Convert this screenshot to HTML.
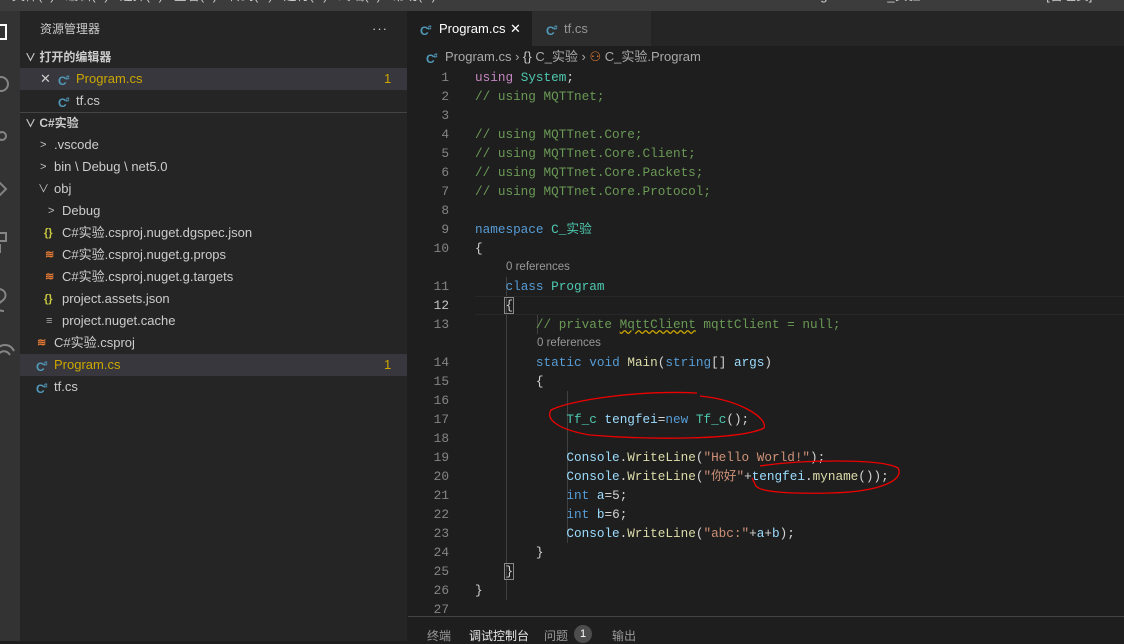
<!DOCTYPE html>
<html><head><meta charset="utf-8"><style>
*{margin:0;padding:0;box-sizing:border-box}
body{width:1124px;height:641px;overflow:hidden;background:#1e1e1e;position:relative;font-family:"Liberation Sans","Noto Sans CJK SC",sans-serif;font-size:13px;color:#ccc}
.abs{position:absolute}
#title{left:0;top:0;width:1124px;height:11px;background:#3c3c3c;color:#ccc;font-size:13px;line-height:0px;white-space:nowrap;overflow:hidden}
#act{left:0;top:11px;width:20px;height:630px;background:#333}
#side{left:20px;top:11px;width:387px;height:630px;background:#252526}
.row{position:absolute;left:0;width:387px;height:22px;line-height:22px;white-space:nowrap;color:#ccc}
.sel{background:#37373d}
.cs{color:#519aba;font-weight:bold;font-size:12px}
.cs sup{font-size:7px;margin-left:-1px}
.chev{color:#c5c5c5;font-size:11px}
#tabs{left:408px;top:11px;width:716px;height:35px;background:#252526}
.tab{position:absolute;top:0;height:35px;line-height:35px;white-space:nowrap}
.code{position:absolute;left:475px;font-family:"Liberation Mono","Noto Sans CJK SC",monospace;font-size:12.7px;height:19px;line-height:19px;white-space:pre;color:#d4d4d4}
.ln{position:absolute;left:410px;width:39px;text-align:right;font-family:"Liberation Mono",monospace;font-size:12.8px;height:19px;line-height:19px;color:#858585}
.lens{position:absolute;font-size:11.5px;color:#999;height:19px;line-height:19px}
.k{color:#569cd6}.t{color:#4ec9b0}.c{color:#6a9955}.s{color:#ce9178}.m{color:#dcdcaa}.v{color:#9cdcfe}.p{color:#c586c0}
.guide{position:absolute;width:1px;background:#404040}
</style></head><body>
<div id="title" class="abs"><span style="position:absolute;left:12px;top:-4px">文件(F) &nbsp; 编辑(E) &nbsp; 选择(S) &nbsp; 查看(V) &nbsp; 转到(G) &nbsp; 运行(R) &nbsp; 终端(T) &nbsp; 帮助(H)</span><span style="position:absolute;left:800px;top:-4px">Program.cs - C_实验 - Visual Studio Code [管理员]</span></div>
<div id="act" class="abs">
<svg width="20" height="630" style="position:absolute;left:0;top:0" fill="none" stroke="#858585" stroke-width="2">
<path d="M-2 14 h8 v14 h-8" stroke="#fff"/>
<circle cx="1" cy="73" r="7"/>
<circle cx="2" cy="125" r="4"/>
<path d="M-2 170 l8 8 l-8 8"/>
<path d="M-4 222 h10 v8 h-10 M-4 234 h4 v8"/>
<path d="M-2 278 c8 0 10 8 4 12 c-6 4 -6 10 2 10"/>
<path d="M-4 340 c4-8 14-8 18 0 M-2 344 c3-5 9-5 12 0"/>
</svg>
</div>
<div id="side" class="abs">
<div class="row" style="top:7px;left:20px;font-size:12px">资源管理器</div>
<div class="row" style="top:7px;left:352px;width:20px;letter-spacing:1px">···</div>
<div class="row" style="top:35px;font-weight:bold;font-size:12px"><span class="chev" style="margin-left:5px">∨</span> 打开的编辑器</div>
<div class="row sel" style="top:57px"><span style="position:absolute;left:20px;color:#ccc">✕</span><span class="cs" style="position:absolute;left:38px">C<sup>#</sup></span><span style="position:absolute;left:56px;color:#cca700">Program.cs</span><span style="position:absolute;left:364px;color:#cca700">1</span></div>
<div class="row" style="top:79px"><span class="cs" style="position:absolute;left:38px">C<sup>#</sup></span><span style="position:absolute;left:56px">tf.cs</span></div>
<div class="abs" style="left:0;top:101px;width:387px;height:1px;background:#444"></div>
<div class="row" style="top:101px;font-weight:bold;font-size:12px"><span class="chev" style="margin-left:5px">∨</span> C#实验</div>
<div class="row" style="top:123px"><span class="chev" style="position:absolute;left:20px">&gt;</span><span style="position:absolute;left:34px">.vscode</span></div>
<div class="row" style="top:145px"><span class="chev" style="position:absolute;left:20px">&gt;</span><span style="position:absolute;left:34px">bin \ Debug \ net5.0</span></div>
<div class="row" style="top:167px"><span class="chev" style="position:absolute;left:18px">∨</span><span style="position:absolute;left:34px">obj</span></div>
<div class="row" style="top:189px"><span class="chev" style="position:absolute;left:28px">&gt;</span><span style="position:absolute;left:42px">Debug</span></div>
<div class="row" style="top:211px"><span style="position:absolute;left:24px;color:#cbcb41;font-size:11px;font-weight:bold">{}</span><span style="position:absolute;left:42px">C#实验.csproj.nuget.dgspec.json</span></div>
<div class="row" style="top:233px"><span style="position:absolute;left:25px;color:#e37933;font-size:11px;font-weight:bold">≋</span><span style="position:absolute;left:42px">C#实验.csproj.nuget.g.props</span></div>
<div class="row" style="top:255px"><span style="position:absolute;left:25px;color:#e37933;font-size:11px;font-weight:bold">≋</span><span style="position:absolute;left:42px">C#实验.csproj.nuget.g.targets</span></div>
<div class="row" style="top:277px"><span style="position:absolute;left:24px;color:#cbcb41;font-size:11px;font-weight:bold">{}</span><span style="position:absolute;left:42px">project.assets.json</span></div>
<div class="row" style="top:299px"><span style="position:absolute;left:26px;color:#aaa;font-size:11px">≡</span><span style="position:absolute;left:42px">project.nuget.cache</span></div>
<div class="row" style="top:321px"><span style="position:absolute;left:17px;color:#e37933;font-size:11px;font-weight:bold">≋</span><span style="position:absolute;left:34px">C#实验.csproj</span></div>
<div class="row sel" style="top:343px"><span class="cs" style="position:absolute;left:16px">C<sup>#</sup></span><span style="position:absolute;left:34px;color:#cca700">Program.cs</span><span style="position:absolute;left:364px;color:#cca700">1</span></div>
<div class="row" style="top:365px"><span class="cs" style="position:absolute;left:16px">C<sup>#</sup></span><span style="position:absolute;left:34px">tf.cs</span></div>
</div>
<div id="tabs" class="abs">
<div class="tab" style="left:0;width:124px;background:#1e1e1e;color:#fff"><span class="cs" style="position:absolute;left:12px">C<sup>#</sup></span><span style="position:absolute;left:31px">Program.cs</span><span style="position:absolute;left:102px">✕</span></div>
<div class="tab" style="left:124px;width:119px;background:#2d2d2d;color:#969696"><span class="cs" style="position:absolute;left:14px">C<sup>#</sup></span><span style="position:absolute;left:32px">tf.cs</span></div>
</div>
<div class="abs" style="left:408px;top:46px;height:22px;line-height:22px;white-space:nowrap;color:#a9a9a9"><span class="cs" style="position:absolute;left:18px">C<sup>#</sup></span><span style="position:absolute;left:37px">Program.cs › <span style="color:#ccc">{}</span> C_实验 › <span style="color:#e37933">⚇</span> C_实验.Program</span></div>

<div class="guide" style="left:506px;top:277px;height:323px"></div>
<div class="guide" style="left:537px;top:315px;height:19px"></div>
<div class="guide" style="left:567px;top:391px;height:152px"></div>
<div class="abs" style="left:475px;top:296px;width:649px;height:19px;border-top:1px solid #282828;border-bottom:1px solid #282828"></div>

<div class="ln" style="top:68px">1</div><div class="code" style="top:68px"><span class="p">using</span> <span class="t">System</span>;</div>
<div class="ln" style="top:87px">2</div><div class="code c" style="top:87px">// using MQTTnet;</div>
<div class="ln" style="top:106px">3</div>
<div class="ln" style="top:125px">4</div><div class="code c" style="top:125px">// using MQTTnet.Core;</div>
<div class="ln" style="top:144px">5</div><div class="code c" style="top:144px">// using MQTTnet.Core.Client;</div>
<div class="ln" style="top:163px">6</div><div class="code c" style="top:163px">// using MQTTnet.Core.Packets;</div>
<div class="ln" style="top:182px">7</div><div class="code c" style="top:182px">// using MQTTnet.Core.Protocol;</div>
<div class="ln" style="top:201px">8</div>
<div class="ln" style="top:220px">9</div><div class="code" style="top:220px"><span class="k">namespace</span> <span class="t">C_实验</span></div>
<div class="ln" style="top:239px">10</div><div class="code" style="top:239px">{</div>
<div class="lens" style="left:506px;top:258px">0 references</div>
<div class="ln" style="top:277px">11</div><div class="code" style="top:277px">    <span class="k">class</span> <span class="t">Program</span></div>
<div class="ln" style="top:296px;color:#c6c6c6">12</div><div class="code" style="top:296px">    <span style="outline:1px solid #888">{</span></div>
<div class="ln" style="top:315px">13</div><div class="code c" style="top:315px">        // private <span style="text-decoration:underline wavy #cca700">MqttClient</span> mqttClient = null;</div>
<div class="lens" style="left:537px;top:334px">0 references</div>
<div class="ln" style="top:353px">14</div><div class="code" style="top:353px">        <span class="k">static</span> <span class="k">void</span> <span class="m">Main</span>(<span class="k">string</span>[] <span class="v">args</span>)</div>
<div class="ln" style="top:372px">15</div><div class="code" style="top:372px">        {</div>
<div class="ln" style="top:391px">16</div>
<div class="ln" style="top:410px">17</div><div class="code" style="top:410px">            <span class="t">Tf_c</span> <span class="v">tengfei</span>=<span class="k">new</span> <span class="t">Tf_c</span>();</div>
<div class="ln" style="top:429px">18</div>
<div class="ln" style="top:448px">19</div><div class="code" style="top:448px">            <span class="v">Console</span>.<span class="m">WriteLine</span>(<span class="s">"Hello World!"</span>);</div>
<div class="ln" style="top:467px">20</div><div class="code" style="top:467px">            <span class="v">Console</span>.<span class="m">WriteLine</span>(<span class="s">"你好"</span>+<span class="v">tengfei</span>.<span class="m">myname</span>());</div>
<div class="ln" style="top:486px">21</div><div class="code" style="top:486px">            <span class="k">int</span> <span class="v">a</span>=5;</div>
<div class="ln" style="top:505px">22</div><div class="code" style="top:505px">            <span class="k">int</span> <span class="v">b</span>=6;</div>
<div class="ln" style="top:524px">23</div><div class="code" style="top:524px">            <span class="v">Console</span>.<span class="m">WriteLine</span>(<span class="s">"abc:"</span>+<span class="v">a</span>+<span class="v">b</span>);</div>
<div class="ln" style="top:543px">24</div><div class="code" style="top:543px">        }</div>
<div class="ln" style="top:562px">25</div><div class="code" style="top:562px">    <span style="outline:1px solid #888">}</span></div>
<div class="ln" style="top:581px">26</div><div class="code" style="top:581px">}</div>
<div class="ln" style="top:600px">27</div>

<svg class="abs" style="left:0;top:0" width="1124" height="641" fill="none" stroke="#e00" stroke-width="1.3">
<path d="M697 393 C640 390 570 400 551 410 C545 420 560 430 590 435 C650 440 740 440 764 428 C768 418 740 400 700 396"/>
<path d="M760 466 C800 460 880 458 898 468 C905 480 880 492 830 493 C790 494 760 492 756 486 L752 478"/>
</svg>

<div class="abs" style="left:408px;top:616px;width:716px;height:1px;background:#444"></div>
<div class="abs" style="left:408px;top:617px;width:716px;height:24px;background:#1e1e1e;font-size:12px;white-space:nowrap">
<span style="position:absolute;left:19px;top:10px;color:#999">终端</span>
<span style="position:absolute;left:61px;top:10px;color:#e7e7e7">调试控制台</span>
<span style="position:absolute;left:136px;top:10px;color:#999">问题</span>
<span style="position:absolute;left:166px;top:8px;width:18px;height:18px;border-radius:9px;background:#4d4d4d;color:#fff;text-align:center;line-height:18px;font-size:11px">1</span>
<span style="position:absolute;left:204px;top:10px;color:#999">输出</span>
</div>
</body></html>
